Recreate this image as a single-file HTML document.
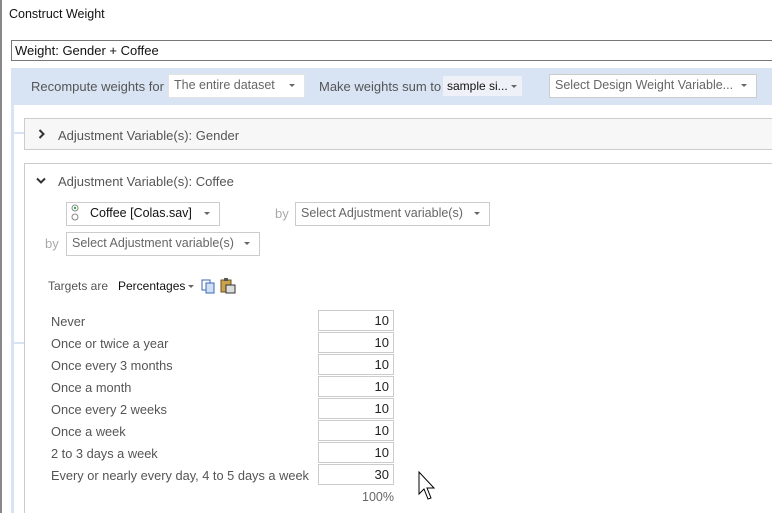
<!DOCTYPE html>
<html style="overflow:hidden;height:513px"><head><style>
*{margin:0;padding:0;box-sizing:border-box}
body{width:772px;height:513px;overflow:hidden;background:#fff;font-family:"Liberation Sans",sans-serif;font-size:12.5px;color:#444;position:relative}
.a{position:absolute;white-space:nowrap}
.dd{position:absolute;border:1px solid #ccc;background:#fff;color:#666;padding:0 0 0 5px;line-height:21px}
.dd:after{content:"";position:absolute;right:9px;top:9px;border-left:3px solid transparent;border-right:3px solid transparent;border-top:3px solid #666}
.inp{position:absolute;left:318px;width:76px;height:21px;border:1px solid #ccc;background:#fff;text-align:right;padding-right:4px;line-height:19px;color:#222;font-size:13px}
.lab{position:absolute;left:51px;color:#555;font-size:12.8px}
</style></head><body>
<div class="a" style="left:0;top:0;width:2px;height:513px;background:#888"></div>
<div class="a" style="left:9px;top:7px;color:#111">Construct Weight</div>
<div class="a" style="left:11px;top:40px;width:770px;height:21px;border:1px solid #777;color:#111;padding-left:3px;line-height:19px;font-size:13px">Weight: Gender + Coffee</div>
<div class="a" style="left:11px;top:68px;width:761px;height:37px;background:#d8e4f4"></div>
<div class="a" style="left:31px;top:79px;font-size:13px;color:#555">Recompute weights for</div>
<div class="dd" style="left:168px;top:74px;width:137px;height:24px;border-color:#e4e4e4">The entire dataset</div>
<div class="a" style="left:319px;top:79px;font-size:13px;color:#555">Make weights sum to</div>
<div class="a" style="left:443px;top:76px;width:79px;height:20px;background:#eef2f8"></div>
<div class="a" style="left:447px;top:79px;color:#111;font-size:12px">sample si...</div>
<div class="a" style="left:511px;top:85px;border-left:3px solid transparent;border-right:3px solid transparent;border-top:3px solid #666"></div>
<div class="dd" style="left:549px;top:74px;width:208px;height:24px;border-color:#ccc">Select Design Weight Variable...</div>
<div class="a" style="left:11px;top:105px;width:3px;height:408px;background:#d8e4f4"></div>
<div class="a" style="left:12px;top:132px;width:12px;height:2px;background:#d8e4f4"></div>
<div class="a" style="left:12px;top:342px;width:12px;height:2px;background:#d8e4f4"></div>
<div class="a" style="left:24px;top:118px;width:760px;height:32px;background:#f7f7f7;border:1px solid #ccc"></div>
<svg class="a" style="left:38px;top:129px" width="8" height="10"><path d="M1.5 1L5.5 5L1.5 9" stroke="#333" stroke-width="2" fill="none"/></svg>
<div class="a" style="left:58px;top:128px;font-size:13px;color:#555">Adjustment Variable(s): Gender</div>
<div class="a" style="left:24px;top:163px;width:760px;height:360px;background:#fff;border:1px solid #ccc"></div>
<svg class="a" style="left:36px;top:177px" width="10" height="8"><path d="M1 1.5L5 5.5L9 1.5" stroke="#333" stroke-width="2" fill="none"/></svg>
<div class="a" style="left:58px;top:174px;font-size:13px;color:#555">Adjustment Variable(s): Coffee</div>
<div class="dd" style="left:66px;top:202px;width:154px;height:24px;color:#111;padding-left:23px">Coffee [Colas.sav]</div>
<svg class="a" style="left:71px;top:204px" width="8" height="18"><circle cx="4" cy="4" r="3" fill="none" stroke="#888"/><circle cx="4" cy="4" r="1.2" fill="#3a3"/><circle cx="4" cy="13" r="3" fill="none" stroke="#888"/></svg>
<div class="a" style="left:275px;top:206px;font-size:13px;color:#aaa">by</div>
<div class="dd" style="left:295px;top:202px;width:195px;height:24px">Select Adjustment variable(s)</div>
<div class="a" style="left:45px;top:236px;font-size:13px;color:#aaa">by</div>
<div class="dd" style="left:66px;top:232px;width:194px;height:24px">Select Adjustment variable(s)</div>
<div class="a" style="left:48px;top:279px;color:#555;font-size:12px">Targets are</div>
<div class="a" style="left:118px;top:279px;color:#111;font-size:12px">Percentages</div>
<div class="a" style="left:188px;top:285px;border-left:3px solid transparent;border-right:3px solid transparent;border-top:3px solid #666"></div>
<svg class="a" style="left:201px;top:278px" width="35" height="16"><rect x="1" y="2" width="8" height="10" fill="#fff" stroke="#3a68b5"/><rect x="5" y="5" width="8" height="10" fill="#cfe0f5" stroke="#3a68b5"/><rect x="20" y="2" width="10" height="12" fill="#c9a24a" stroke="#6b5220"/><rect x="23" y="0" width="4" height="3" fill="#555"/><rect x="25" y="7" width="9" height="8" fill="#ddd" stroke="#333"/></svg>
<div class="lab" style="top:314px">Never</div>
<div class="lab" style="top:336px">Once or twice a year</div>
<div class="lab" style="top:358px">Once every 3 months</div>
<div class="lab" style="top:380px">Once a month</div>
<div class="lab" style="top:402px">Once every 2 weeks</div>
<div class="lab" style="top:424px">Once a week</div>
<div class="lab" style="top:446px">2 to 3 days a week</div>
<div class="lab" style="top:468px">Every or nearly every day, 4 to 5 days a week</div>
<div class="inp" style="top:310px">10</div>
<div class="inp" style="top:332px">10</div>
<div class="inp" style="top:354px">10</div>
<div class="inp" style="top:376px">10</div>
<div class="inp" style="top:398px">10</div>
<div class="inp" style="top:420px">10</div>
<div class="inp" style="top:442px">10</div>
<div class="inp" style="top:464px">30</div>
<div class="a" style="left:362px;top:490px;color:#666">100%</div>
<svg class="a" style="left:418px;top:471px" width="22" height="32"><path d="M1 1L1 23L6 18L10 28L13 27L9 17L16 17Z" fill="#fff" stroke="#000" stroke-width="1"/></svg>
</body></html>
